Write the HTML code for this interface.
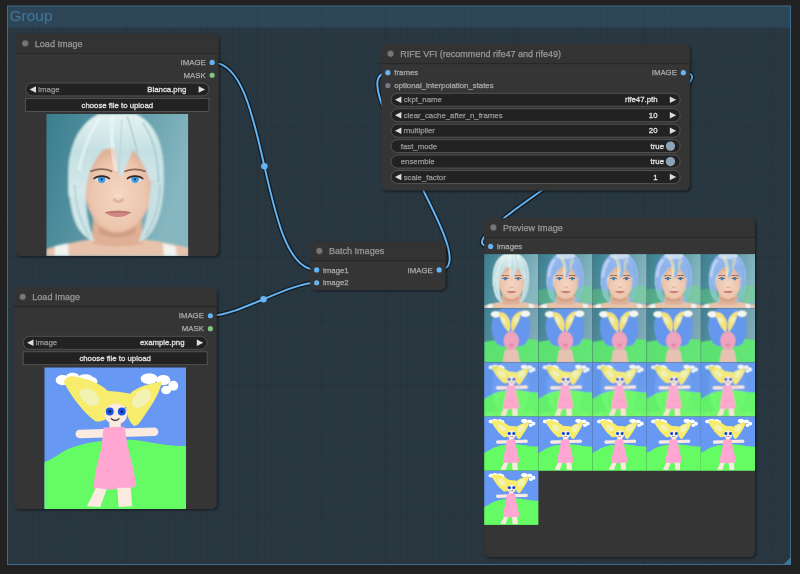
<!DOCTYPE html><html><head><meta charset="utf-8"><style>html,body{margin:0;padding:0;background:#222;overflow:hidden}svg{display:block;will-change:transform}text{font-family:"Liberation Sans", sans-serif}</style></head><body>
<svg width="800" height="574" viewBox="0 0 800 574">
<defs>
<pattern id="gmin" x="0.25" y="0.25" width="6.45" height="6.45" patternUnits="userSpaceOnUse"><rect width="6.45" height="0.9" fill="#000" opacity="0.035"/><rect width="0.9" height="6.45" fill="#000" opacity="0.035"/></pattern>
<pattern id="gmaj" x="62.25" y="62.25" width="64.5" height="64.5" patternUnits="userSpaceOnUse"><rect width="64.5" height="1.2" fill="#000" opacity="0.06"/><rect width="1.2" height="64.5" fill="#000" opacity="0.06"/></pattern>
<filter id="shadow" x="-10%" y="-10%" width="120%" height="120%"><feGaussianBlur stdDeviation="1.2"/></filter>
</defs>

<symbol id="portrait" viewBox="0 0 100 100" preserveAspectRatio="none">
  <defs>
    <linearGradient id="pbg" x1="0" y1="0" x2="1" y2="0.3">
      <stop offset="0" stop-color="#3a7e8f"/>
      <stop offset="0.5" stop-color="#5b97a5"/>
      <stop offset="1" stop-color="#86b7c1"/>
    </linearGradient>
    <linearGradient id="phair" x1="0" y1="0" x2="0" y2="1">
      <stop offset="0" stop-color="#e4f2f1"/>
      <stop offset="0.45" stop-color="#c5e0e3"/>
      <stop offset="1" stop-color="#d5e9ea"/>
    </linearGradient>
    <radialGradient id="pskin" cx="0.5" cy="0.55" r="0.6">
      <stop offset="0" stop-color="#f5d6c2"/>
      <stop offset="0.65" stop-color="#edc6ae"/>
      <stop offset="1" stop-color="#d9a78e"/>
    </radialGradient>
    <filter id="pb1" x="-20%" y="-20%" width="140%" height="140%"><feGaussianBlur stdDeviation="0.9"/></filter>
    <filter id="pb2" x="-20%" y="-20%" width="140%" height="140%"><feGaussianBlur stdDeviation="0.45"/></filter>
  </defs>
  <rect width="100" height="100" fill="url(#pbg)"/>
  <g filter="url(#pb1)">
  <path d="M0,95 C10,92 24,89 34,88 L66,88 C78,89 90,92 100,94 L100,100 L0,100 Z" fill="#e8c3ab"/>
  <path d="M6,93 L15,91 L16,100 L6,100 Z" fill="#f2f2f0"/>
  <path d="M82,91 L91,93 L92,100 L83,100 Z" fill="#f2f2f0"/>
  <path d="M33,72 L67,72 L68,91 C58,94 42,94 32,91 Z" fill="#dfb096"/>
  <path d="M37,84 C45,88 55,88 63,84 L63,80 L37,80 Z" fill="#c99478" opacity="0.6"/>
  <path d="M37,0 L63,0 C72,4 80,14 82,30 C83.5,48 81,66 76,80 C73,86 69,89 65,90 C69,82 72,72 72,60 L28,60 C28,72 30,82 34,90 C29,88 24,84 21,78 C16,66 15,50 15.5,38 C16,22 25,7 37,0 Z" fill="url(#phair)"/>
  <path d="M26.5,42 C26.5,30 36,24 50,24 C64,24 75,30 75,44 C75.5,56 73,65 68,73 C62,80 56,83.5 50,83.5 C44,83.5 38,80 33,73 C28,65 26,54 26.5,42 Z" fill="url(#pskin)"/>
  <ellipse cx="24.5" cy="55" rx="2.6" ry="4.5" fill="#dba88e"/>
  <ellipse cx="75.5" cy="55" rx="2.6" ry="4.5" fill="#dba88e"/>
  <path d="M16,44 C15.5,58 18,72 24,80 C28,85 31,88 34,90 C31,82 29,74 28,64 C27,56 27,50 27,44 Z" fill="#cfe5e7"/>
  <path d="M83,44 C83,58 81,70 77,78 C74,84 69,88 65,90 C68,82 71,74 72,64 C73,56 74,50 74,44 Z" fill="#c7e0e3"/>
  <path d="M15.5,58 C15,40 16,24 22,14 C27,6 32,2 37,0 L63,0 C72,4 80,14 82,30 C82.8,36 82.8,40 82.5,44 L73,47 C70,38 66,31 61,25 C58,32 55,40 52,46 C50,37 49,27 47,18 C40,24 34,32 30.5,41 C29,46 28,52 27.5,58 Z" fill="url(#phair)"/>
  </g>
  <g filter="url(#pb2)" fill="none">
  <path d="M47,1 C45,10 46,22 49,40" stroke="#f3fafa" stroke-width="3" opacity="0.45"/>
  <path d="M57,2 C61,12 63,22 65,32" stroke="#9fc3ca" stroke-width="1.6" opacity="0.45"/>
  <path d="M38,3 C31,12 26,24 23,40" stroke="#f2fafa" stroke-width="2.5" opacity="0.45"/>
  <path d="M68,6 C76,18 79,32 79,48" stroke="#a3c6cc" stroke-width="2" opacity="0.45"/>
  <path d="M20,50 C20,62 23,74 30,86" stroke="#acd0d5" stroke-width="2" opacity="0.5"/>
  <path d="M80,50 C80,62 77,74 70,86" stroke="#a7ccd2" stroke-width="2" opacity="0.5"/>
  <path d="M53,4 C53,15 52,28 51,42" stroke="#b3d3d8" stroke-width="1.4" opacity="0.45"/>
  <path d="M31,40.5 C36,38.5 42,38.5 46.5,40.5" stroke="#8a6654" stroke-width="1.3"/>
  <path d="M55,40.5 C60,38.5 65,38.5 70,40.5" stroke="#8a6654" stroke-width="1.3"/>
  </g>
  <g filter="url(#pb2)">
  <ellipse cx="39" cy="46" rx="5.2" ry="2.3" fill="#e9d8d2"/>
  <ellipse cx="62.5" cy="46" rx="5.2" ry="2.3" fill="#e9d8d2"/>
  <circle cx="39" cy="46" r="2.6" fill="#3a9de8"/>
  <circle cx="62.5" cy="46" r="2.6" fill="#3a9de8"/>
  <circle cx="39" cy="46" r="0.8" fill="#1a3550"/>
  <circle cx="62.5" cy="46" r="0.8" fill="#1a3550"/>
  <path d="M33.3,45.8 C36,43 42,43 44.7,45.8" stroke="#3a2824" stroke-width="1.2" fill="none"/>
  <path d="M56.8,45.8 C59.5,43 65.5,43 68.2,45.8" stroke="#3a2824" stroke-width="1.2" fill="none"/>
  <ellipse cx="50.8" cy="60.5" rx="4" ry="2.2" fill="#c9917a" opacity="0.45"/><ellipse cx="50.8" cy="58.5" rx="2.6" ry="2" fill="#f6dccb" opacity="0.7"/>
  <path d="M41.5,69.5 C46,67.5 55,67.5 59.5,69.5 C55,73.5 46,73.5 41.5,69.5 Z" fill="#d08682"/>
  <path d="M41.5,69.5 C46,68.8 55,68.8 59.5,69.5" stroke="#a8605c" stroke-width="0.6" fill="none"/>
  </g>
</symbol>


<symbol id="drawing" viewBox="0 0 100 100" preserveAspectRatio="none">
  <rect width="100" height="100" fill="#6698f4"/>
  <path d="M0,67 C5,65 9,62 14,59 C20,56 30,53 40,52 C50,50.5 62,50.5 72,52.5 C80,54 90,55.5 100,55.5 L100,100 L0,100 Z" fill="#65fb64"/>
  <g fill="#ffffff">
    <ellipse cx="13" cy="9" rx="5" ry="3.6"/><ellipse cx="20" cy="7.5" rx="5" ry="3.6"/><ellipse cx="29" cy="8.5" rx="6" ry="3.6"/><ellipse cx="34" cy="10" rx="3.5" ry="3"/>
    <ellipse cx="74" cy="8" rx="6" ry="3.8"/><ellipse cx="84" cy="9" rx="5" ry="3.6"/><ellipse cx="91" cy="13" rx="3.5" ry="3.5"/><ellipse cx="86" cy="16" rx="3.5" ry="3"/>
  </g>
  <g fill="#f7ec6c">
    <path d="M14,11 C14,7 18,6 22,6.5 C30,8 38,11 43,15 C47,19 48,24 47,30 C46,36 42,39 36,38 C28,32 20,22 14,11 Z"/>
    <path d="M83,10 C82,16 78,24 72,32 C68,38 66,42 63,41 C59,38 57,30 58,23 C60,16 70,12 83,10 Z"/>
    <path d="M40,16 C46,17 54,17 62,19 L62,28 L40,28 Z"/>
  </g>
  <g fill="#f2f2b2">
    <ellipse cx="32" cy="21" rx="8" ry="5" transform="rotate(38 32 21)"/>
    <ellipse cx="68.5" cy="22" rx="8" ry="5" transform="rotate(-45 68.5 22)"/>
  </g>
  <ellipse cx="50.5" cy="33" rx="8" ry="7.5" fill="#faeadf"/>
  <rect x="46" y="38" width="8" height="5" fill="#faeadf"/>
  <circle cx="46.2" cy="31.2" r="2.8" fill="#1a55e6"/>
  <circle cx="54.7" cy="31.2" r="2.8" fill="#1a55e6"/>
  <circle cx="46.2" cy="31.2" r="0.9" fill="#0a1a40"/>
  <circle cx="54.7" cy="31.2" r="0.9" fill="#0a1a40"/>
  <path d="M47,36 C49,38 51,38 53,36" stroke="#222" stroke-width="0.8" fill="none"/>
  <path d="M25,47 L77.5,45.5" stroke="#faeadf" stroke-width="6" stroke-linecap="round"/>
  <path d="M42,42.5 L56.5,42 C58,48 58,53 59,56 C61,65 64,75 65,84 C58,86 46,87 35,85.5 C35,75 38,66 40,58 C41,52 41,47 42,42.5 Z" fill="#ffa6d2"/>
  <path d="M36.5,85 L44,86 L39.5,98.5 L30,98 Z" fill="#faeadf"/>
  <path d="M51.5,85 L61,85 L62,98 L52.5,98.5 Z" fill="#faeadf"/>
</symbol>


<symbol id="morphA" viewBox="0 0 100 100" preserveAspectRatio="none">
  <defs>
    <mask id="hairmask" maskUnits="userSpaceOnUse" x="0" y="0" width="100" height="100">
      <rect width="100" height="100" fill="#000"/>
      <path d="M36,0 L62,0 C74,3 82,16 82.5,32 C83,48 81,66 76,80 C73,86 69,89 65,90 L34,90 C29,88 24,84 21,78 C16,66 15,50 15.5,36 C16,18 24,4 36,0 Z" fill="#fff"/>
      <path d="M26.5,42 C26.5,30 36,24 50,24 C64,24 75,30 75,44 C75.5,56 73,65 68,73 C62,80 56,83.5 50,83.5 C44,83.5 38,80 33,73 C28,65 26,54 26.5,42 Z" fill="#000"/>
      <path d="M30,70 L70,70 L68,92 L32,92 Z" fill="#000"/>
      <path d="M15.5,44 C16,22 26,3 46,0 L62,0 C76,4 83,20 82.5,44 L71,44 C69,37 66,31 61,25 C58,32 55,40 52,46 C50,37 49,27 47,18 C40,24 33,33 27,44 Z" fill="#fff"/>
      <path d="M16,44 C15.5,58 18,72 24,80 C28,85 31,88 34,90 C31,82 29,74 28,64 C27,56 27,50 27,44 Z" fill="#fff"/>
      <path d="M83,44 C83,58 81,70 77,78 C74,84 69,88 65,90 C68,82 71,74 72,64 C73,56 74,50 74,44 Z" fill="#fff"/>
    </mask>
    <filter id="mb1" x="-20%" y="-20%" width="140%" height="140%"><feGaussianBlur stdDeviation="1.2"/></filter>
  </defs>
  <use href="#portrait" x="0" y="0" width="100" height="100"/>
  <g filter="url(#mb1)">
    <rect width="100" height="100" fill="#5f8ff0" opacity="0.55" mask="url(#hairmask)"/>
    <path d="M38,6 C44,12 47,22 48,36 C50,38 52,36 53,30 C52,20 48,10 44,4 Z" fill="#f2eea0" opacity="0.6"/><path d="M60,8 C58,16 57,24 58,30 C60,28 63,20 66,10 Z" fill="#f2eea0" opacity="0.5"/>
    <ellipse cx="12" cy="78" rx="22" ry="14" fill="#60f060" opacity="0.3"/><ellipse cx="88" cy="74" rx="20" ry="16" fill="#60f060" opacity="0.3"/>
    <path d="M30,10 C24,18 20,30 19,42" stroke="#f0f6f6" stroke-width="4" fill="none" opacity="0.5"/>
    <ellipse cx="50" cy="3" rx="18" ry="6" fill="#eef6f4" opacity="0.55"/>
  </g>
</symbol>
<symbol id="morphB" viewBox="0 0 100 100" preserveAspectRatio="none">
  <defs>
    <filter id="mb2" x="-20%" y="-20%" width="140%" height="140%"><feGaussianBlur stdDeviation="0.9"/></filter>
    <linearGradient id="mbg" x1="0" y1="0" x2="1" y2="0.3">
      <stop offset="0" stop-color="#3f8092"/>
      <stop offset="1" stop-color="#7faab8"/>
    </linearGradient>
  </defs>
  <rect width="100" height="100" fill="url(#mbg)"/>
  <g filter="url(#mb2)">
    <path d="M0,62 C20,58 40,56 60,56 C80,56 90,58 100,58 L100,100 L0,100 Z" fill="#5ef06a" opacity="0.85"/>
    <path d="M34,0 L64,0 C76,3 84,16 84.5,32 C85,46 82,58 76,66 C68,73 32,73 24,66 C17,58 14,46 13.5,32 C14,18 22,4 34,0 Z" fill="#6598ec"/>
    <ellipse cx="21" cy="11" rx="9" ry="6" fill="#f4f6f2"/>
    <ellipse cx="76" cy="10" rx="9" ry="6" fill="#f4f6f2"/>
    <path d="M26,8 C34,5 42,10 47,22 C49,32 48,40 46,44 C38,38 31,26 26,8 Z" fill="#f2e278"/>
    <path d="M68,5 C68,16 62,30 52,44 C49,36 49,26 52,18 C57,10 62,7 68,5 Z" fill="#f2e278"/>
    <ellipse cx="36" cy="22" rx="4" ry="7" fill="#eef0b8" transform="rotate(-30 36 22)"/><ellipse cx="59" cy="21" rx="4" ry="7" fill="#eef0b8" transform="rotate(30 59 21)"/>
    <path d="M38,78 C44,74 56,74 62,78 L66,100 L34,100 Z" fill="#e6c2b2"/>
    <ellipse cx="50" cy="60" rx="14" ry="17" fill="#eea4bd"/>
    <ellipse cx="50" cy="68" rx="5" ry="3" fill="#e58aa8"/>
    </g>
</symbol>

<filter id="cellblur" x="-5%" y="-5%" width="110%" height="110%"><feGaussianBlur stdDeviation="0.6"/></filter><filter id="cellblur2" x="-5%" y="-5%" width="110%" height="110%"><feGaussianBlur stdDeviation="1.2"/></filter>
<rect width="800" height="574" fill="#222"/>
<rect x="7" y="6" width="783.5" height="558.5" fill="#3f789e" fill-opacity="0.25"/>
<rect x="7" y="6" width="783.5" height="21.67" fill="#3f789e" fill-opacity="0.25"/>
<rect width="800" height="574" fill="url(#gmin)"/>
<rect width="800" height="574" fill="url(#gmaj)"/>
<rect x="7.5" y="6" width="783.0" height="558.5" fill="none" stroke="#3f789e" stroke-width="1" stroke-opacity="0.85"/>
<path d="M791.0,564.5 L783.50,564.5 L791.0,557.00 Z" fill="#3f789e"/>
<text x="9.58" y="21.48" font-size="15.48" fill="#3f789e">Group</text>
<path d="M212.15,62.38 C270.23,62.38 258.57,269.88 316.65,269.88" fill="none" stroke="#000" stroke-opacity="0.5" stroke-width="4.52" stroke-linejoin="round"/>
<path d="M212.15,62.38 C270.23,62.38 258.57,269.88 316.65,269.88" fill="none" stroke="#64b5f6" stroke-width="1.94"/>
<circle cx="264.40" cy="166.13" r="3.23" fill="#64b5f6"/>
<path d="M210.35,315.73 C238.17,315.73 288.83,282.78 316.65,282.78" fill="none" stroke="#000" stroke-opacity="0.5" stroke-width="4.52" stroke-linejoin="round"/>
<path d="M210.35,315.73 C238.17,315.73 288.83,282.78 316.65,282.78" fill="none" stroke="#64b5f6" stroke-width="1.94"/>
<circle cx="263.50" cy="299.26" r="3.23" fill="#64b5f6"/>
<path d="M439.15,269.88 C490.09,269.88 336.91,72.68 387.85,72.68" fill="none" stroke="#000" stroke-opacity="0.5" stroke-width="4.52" stroke-linejoin="round"/>
<path d="M439.15,269.88 C490.09,269.88 336.91,72.68 387.85,72.68" fill="none" stroke="#64b5f6" stroke-width="1.94"/>
<circle cx="413.50" cy="171.28" r="3.23" fill="#64b5f6"/>
<path d="M683.35,72.68 C748.21,72.68 425.79,246.38 490.65,246.38" fill="none" stroke="#000" stroke-opacity="0.5" stroke-width="4.52" stroke-linejoin="round"/>
<path d="M683.35,72.68 C748.21,72.68 425.79,246.38 490.65,246.38" fill="none" stroke="#64b5f6" stroke-width="1.94"/>
<circle cx="587.00" cy="159.53" r="3.23" fill="#64b5f6"/>
<rect x="17.30" y="35.30" width="202.60" height="222.00" rx="5.16" fill="#000" opacity="0.45" filter="url(#shadow)"/>
<rect x="16.00" y="34.00" width="202.60" height="222.00" rx="5.16" fill="#353535"/>
<path d="M16.00,53.35 L16.00,39.16 Q16.00,34.00 21.16,34.00 L213.44,34.00 Q218.60,34.00 218.60,39.16 L218.60,53.35 Z" fill="#333"/>
<rect x="16.00" y="52.70" width="202.60" height="1.3" fill="#000" opacity="0.2"/>
<circle cx="25.18" cy="43.47" r="3.4" fill="#777" stroke="#2c2c2c" stroke-width="0.5"/>
<text x="34.85" y="46.60" font-size="9.030000000000001" fill="#999" stroke="#999" stroke-width="0.25" text-anchor="start" font-weight="normal">Load Image</text>
<circle cx="212.15" cy="62.38" r="2.58" fill="#64b5f6"/>
<text x="205.70" y="65.09" font-size="7.8" fill="#aaa" stroke="#aaa" stroke-width="0.25" text-anchor="end" font-weight="normal">IMAGE</text>
<circle cx="212.15" cy="75.28" r="2.58" fill="#81c784"/>
<text x="205.70" y="77.99" font-size="7.8" fill="#aaa" stroke="#aaa" stroke-width="0.25" text-anchor="end" font-weight="normal">MASK</text>
<rect x="25.68" y="83.02" width="183.25" height="12.90" rx="6.45" fill="#222" stroke="#666" stroke-width="0.65"/>
<path d="M36.00,86.25 L29.55,89.47 L36.00,92.70 Z" fill="#ddd"/>
<path d="M198.60,86.25 L205.05,89.47 L198.60,92.70 Z" fill="#ddd"/>
<text x="38.33" y="92.05" font-size="7.8" fill="#999" stroke="#999" stroke-width="0.25" text-anchor="start" font-weight="normal">image</text>
<text x="186.35" y="92.05" font-size="7.8" fill="#ddd" stroke="#ddd" stroke-width="0.35" text-anchor="end" font-weight="normal">Bianca.png</text>
<rect x="25.68" y="98.50" width="183.25" height="12.90" fill="#222" stroke="#666" stroke-width="0.65"/>
<text x="117.30" y="107.53" font-size="7.8" fill="#ddd" stroke="#ddd" stroke-width="0.35" text-anchor="middle" font-weight="normal">choose file to upload</text>
<use href="#portrait" x="46.29" y="113.98" width="142.02" height="142.02"/>
<rect x="14.80" y="288.65" width="203.30" height="221.70" rx="5.16" fill="#000" opacity="0.45" filter="url(#shadow)"/>
<rect x="13.50" y="287.35" width="203.30" height="221.70" rx="5.16" fill="#353535"/>
<path d="M13.50,306.70 L13.50,292.51 Q13.50,287.35 18.66,287.35 L211.64,287.35 Q216.80,287.35 216.80,292.51 L216.80,306.70 Z" fill="#333"/>
<rect x="13.50" y="306.05" width="203.30" height="1.3" fill="#000" opacity="0.2"/>
<circle cx="22.68" cy="296.83" r="3.4" fill="#777" stroke="#2c2c2c" stroke-width="0.5"/>
<text x="32.35" y="299.95" font-size="9.030000000000001" fill="#999" stroke="#999" stroke-width="0.25" text-anchor="start" font-weight="normal">Load Image</text>
<circle cx="210.35" cy="315.73" r="2.58" fill="#64b5f6"/>
<text x="203.90" y="318.44" font-size="7.8" fill="#aaa" stroke="#aaa" stroke-width="0.25" text-anchor="end" font-weight="normal">IMAGE</text>
<circle cx="210.35" cy="328.63" r="2.58" fill="#81c784"/>
<text x="203.90" y="331.34" font-size="7.8" fill="#aaa" stroke="#aaa" stroke-width="0.25" text-anchor="end" font-weight="normal">MASK</text>
<rect x="23.18" y="336.37" width="183.95" height="12.90" rx="6.45" fill="#222" stroke="#666" stroke-width="0.65"/>
<path d="M33.50,339.60 L27.05,342.82 L33.50,346.05 Z" fill="#ddd"/>
<path d="M196.81,339.60 L203.25,342.82 L196.81,346.05 Z" fill="#ddd"/>
<text x="35.83" y="345.40" font-size="7.8" fill="#999" stroke="#999" stroke-width="0.25" text-anchor="start" font-weight="normal">image</text>
<text x="184.55" y="345.40" font-size="7.8" fill="#ddd" stroke="#ddd" stroke-width="0.35" text-anchor="end" font-weight="normal">example.png</text>
<rect x="23.18" y="351.85" width="183.95" height="12.90" fill="#222" stroke="#666" stroke-width="0.65"/>
<text x="115.15" y="360.88" font-size="7.8" fill="#ddd" stroke="#ddd" stroke-width="0.35" text-anchor="middle" font-weight="normal">choose file to upload</text>
<use href="#drawing" x="44.29" y="367.33" width="141.72" height="141.72"/>
<rect x="311.50" y="242.80" width="135.40" height="48.40" rx="5.16" fill="#000" opacity="0.45" filter="url(#shadow)"/>
<rect x="310.20" y="241.50" width="135.40" height="48.40" rx="5.16" fill="#353535"/>
<path d="M310.20,260.85 L310.20,246.66 Q310.20,241.50 315.36,241.50 L440.44,241.50 Q445.60,241.50 445.60,246.66 L445.60,260.85 Z" fill="#333"/>
<rect x="310.20" y="260.20" width="135.40" height="1.3" fill="#000" opacity="0.2"/>
<circle cx="319.38" cy="250.98" r="3.4" fill="#777" stroke="#2c2c2c" stroke-width="0.5"/>
<text x="329.05" y="254.10" font-size="9.030000000000001" fill="#999" stroke="#999" stroke-width="0.25" text-anchor="start" font-weight="normal">Batch Images</text>
<circle cx="316.65" cy="269.88" r="2.58" fill="#64b5f6"/>
<text x="323.10" y="272.59" font-size="7.8" fill="#aaa" stroke="#aaa" stroke-width="0.25" text-anchor="start" font-weight="normal">image1</text>
<circle cx="316.65" cy="282.78" r="2.58" fill="#64b5f6"/>
<text x="323.10" y="285.49" font-size="7.8" fill="#aaa" stroke="#aaa" stroke-width="0.25" text-anchor="start" font-weight="normal">image2</text>
<circle cx="439.15" cy="269.88" r="2.58" fill="#64b5f6"/>
<text x="432.70" y="272.59" font-size="7.8" fill="#aaa" stroke="#aaa" stroke-width="0.25" text-anchor="end" font-weight="normal">IMAGE</text>
<rect x="382.70" y="45.60" width="308.40" height="146.10" rx="5.16" fill="#000" opacity="0.45" filter="url(#shadow)"/>
<rect x="381.40" y="44.30" width="308.40" height="146.10" rx="5.16" fill="#353535"/>
<path d="M381.40,63.65 L381.40,49.46 Q381.40,44.30 386.56,44.30 L684.64,44.30 Q689.80,44.30 689.80,49.46 L689.80,63.65 Z" fill="#333"/>
<rect x="381.40" y="63.00" width="308.40" height="1.3" fill="#000" opacity="0.2"/>
<circle cx="390.57" cy="53.77" r="3.4" fill="#777" stroke="#2c2c2c" stroke-width="0.5"/>
<text x="400.25" y="56.90" font-size="9.030000000000001" fill="#999" stroke="#999" stroke-width="0.25" text-anchor="start" font-weight="normal">RIFE VFI (recommend rife47 and rife49)</text>
<circle cx="387.85" cy="72.68" r="2.58" fill="#64b5f6"/>
<text x="394.30" y="75.39" font-size="7.8" fill="#aaa" stroke="#aaa" stroke-width="0.25" text-anchor="start" font-weight="normal">frames</text>
<circle cx="387.85" cy="85.58" r="2.58" fill="#778"/>
<text x="394.30" y="88.29" font-size="7.8" fill="#aaa" stroke="#aaa" stroke-width="0.25" text-anchor="start" font-weight="normal">optional_interpolation_states</text>
<circle cx="683.35" cy="72.68" r="2.58" fill="#64b5f6"/>
<text x="676.90" y="75.39" font-size="7.8" fill="#aaa" stroke="#aaa" stroke-width="0.25" text-anchor="end" font-weight="normal">IMAGE</text>
<rect x="391.07" y="93.32" width="289.05" height="12.90" rx="6.45" fill="#222" stroke="#666" stroke-width="0.65"/>
<path d="M401.39,96.54 L394.94,99.77 L401.39,103.00 Z" fill="#ddd"/>
<path d="M669.80,96.54 L676.25,99.77 L669.80,103.00 Z" fill="#ddd"/>
<text x="403.72" y="102.35" font-size="7.8" fill="#999" stroke="#999" stroke-width="0.25" text-anchor="start" font-weight="normal">ckpt_name</text>
<text x="657.55" y="102.35" font-size="7.8" fill="#ddd" stroke="#ddd" stroke-width="0.35" text-anchor="end" font-weight="normal">rife47.pth</text>
<rect x="391.07" y="108.77" width="289.05" height="12.90" rx="6.45" fill="#222" stroke="#666" stroke-width="0.65"/>
<path d="M401.39,111.99 L394.94,115.22 L401.39,118.45 Z" fill="#ddd"/>
<path d="M669.80,111.99 L676.25,115.22 L669.80,118.45 Z" fill="#ddd"/>
<text x="403.72" y="117.80" font-size="7.8" fill="#999" stroke="#999" stroke-width="0.25" text-anchor="start" font-weight="normal">clear_cache_after_n_frames</text>
<text x="657.55" y="117.80" font-size="7.8" fill="#ddd" stroke="#ddd" stroke-width="0.35" text-anchor="end" font-weight="normal">10</text>
<rect x="391.07" y="124.22" width="289.05" height="12.90" rx="6.45" fill="#222" stroke="#666" stroke-width="0.65"/>
<path d="M401.39,127.44 L394.94,130.67 L401.39,133.90 Z" fill="#ddd"/>
<path d="M669.80,127.44 L676.25,130.67 L669.80,133.90 Z" fill="#ddd"/>
<text x="403.72" y="133.25" font-size="7.8" fill="#999" stroke="#999" stroke-width="0.25" text-anchor="start" font-weight="normal">multiplier</text>
<text x="657.55" y="133.25" font-size="7.8" fill="#ddd" stroke="#ddd" stroke-width="0.35" text-anchor="end" font-weight="normal">20</text>
<rect x="391.07" y="139.67" width="289.05" height="12.90" rx="6.45" fill="#222" stroke="#666" stroke-width="0.65"/>
<text x="400.75" y="148.70" font-size="7.8" fill="#999" stroke="#999" stroke-width="0.25" text-anchor="start" font-weight="normal">fast_mode</text>
<text x="664.00" y="148.70" font-size="7.8" fill="#ddd" stroke="#ddd" stroke-width="0.35" text-anchor="end" font-weight="normal">true</text>
<circle cx="670.45" cy="146.12" r="4.64" fill="#8ca2b8"/>
<rect x="391.07" y="155.12" width="289.05" height="12.90" rx="6.45" fill="#222" stroke="#666" stroke-width="0.65"/>
<text x="400.75" y="164.15" font-size="7.8" fill="#999" stroke="#999" stroke-width="0.25" text-anchor="start" font-weight="normal">ensemble</text>
<text x="664.00" y="164.15" font-size="7.8" fill="#ddd" stroke="#ddd" stroke-width="0.35" text-anchor="end" font-weight="normal">true</text>
<circle cx="670.45" cy="161.57" r="4.64" fill="#8ca2b8"/>
<rect x="391.07" y="170.57" width="289.05" height="12.90" rx="6.45" fill="#222" stroke="#666" stroke-width="0.65"/>
<path d="M401.39,173.79 L394.94,177.02 L401.39,180.25 Z" fill="#ddd"/>
<path d="M669.80,173.79 L676.25,177.02 L669.80,180.25 Z" fill="#ddd"/>
<text x="403.72" y="179.60" font-size="7.8" fill="#999" stroke="#999" stroke-width="0.25" text-anchor="start" font-weight="normal">scale_factor</text>
<text x="657.55" y="179.60" font-size="7.8" fill="#ddd" stroke="#ddd" stroke-width="0.35" text-anchor="end" font-weight="normal">1</text>
<rect x="485.50" y="219.30" width="270.80" height="339.00" rx="5.16" fill="#000" opacity="0.45" filter="url(#shadow)"/>
<rect x="484.20" y="218.00" width="270.80" height="339.00" rx="5.16" fill="#353535"/>
<path d="M484.20,237.35 L484.20,223.16 Q484.20,218.00 489.36,218.00 L749.84,218.00 Q755.00,218.00 755.00,223.16 L755.00,237.35 Z" fill="#333"/>
<rect x="484.20" y="236.70" width="270.80" height="1.3" fill="#000" opacity="0.2"/>
<circle cx="493.38" cy="227.48" r="3.4" fill="#777" stroke="#2c2c2c" stroke-width="0.5"/>
<text x="503.05" y="230.60" font-size="9.030000000000001" fill="#999" stroke="#999" stroke-width="0.25" text-anchor="start" font-weight="normal">Preview Image</text>
<circle cx="490.65" cy="246.38" r="2.58" fill="#64b5f6"/>
<text x="497.10" y="249.09" font-size="7.8" fill="#aaa" stroke="#aaa" stroke-width="0.25" text-anchor="start" font-weight="normal">images</text>
<svg x="484.20" y="254.12" width="54.16" height="54.16" viewBox="0 0 100 100" preserveAspectRatio="none">
<use href="#portrait" width="100" height="100"/>
</svg>
<svg x="538.36" y="254.12" width="54.16" height="54.16" viewBox="0 0 100 100" preserveAspectRatio="none">
<use href="#morphA" width="100" height="100"/>
</svg>
<svg x="592.52" y="254.12" width="54.16" height="54.16" viewBox="0 0 100 100" preserveAspectRatio="none">
<use href="#morphA" width="100" height="100"/>
</svg>
<svg x="646.68" y="254.12" width="54.16" height="54.16" viewBox="0 0 100 100" preserveAspectRatio="none">
<use href="#morphA" width="100" height="100"/>
</svg>
<svg x="700.84" y="254.12" width="54.16" height="54.16" viewBox="0 0 100 100" preserveAspectRatio="none">
<use href="#morphA" width="100" height="100"/>
</svg>
<svg x="484.20" y="308.28" width="54.16" height="54.16" viewBox="0 0 100 100" preserveAspectRatio="none">
<use href="#morphB" width="100" height="100"/>
</svg>
<svg x="538.36" y="308.28" width="54.16" height="54.16" viewBox="0 0 100 100" preserveAspectRatio="none">
<use href="#morphB" width="100" height="100"/>
</svg>
<svg x="592.52" y="308.28" width="54.16" height="54.16" viewBox="0 0 100 100" preserveAspectRatio="none">
<use href="#morphB" width="100" height="100"/>
</svg>
<svg x="646.68" y="308.28" width="54.16" height="54.16" viewBox="0 0 100 100" preserveAspectRatio="none">
<use href="#morphB" width="100" height="100"/>
</svg>
<svg x="700.84" y="308.28" width="54.16" height="54.16" viewBox="0 0 100 100" preserveAspectRatio="none">
<use href="#morphB" width="100" height="100"/>
</svg>
<svg x="484.20" y="362.44" width="54.16" height="54.16" viewBox="0 0 100 100" preserveAspectRatio="none">
<use href="#drawing" width="100" height="100"/><g filter="url(#cellblur2)"><use href="#drawing" width="100" height="100"/><use href="#portrait" width="100" height="100" opacity="0.1"/></g>
</svg>
<svg x="538.36" y="362.44" width="54.16" height="54.16" viewBox="0 0 100 100" preserveAspectRatio="none">
<use href="#drawing" width="100" height="100"/><g filter="url(#cellblur2)"><use href="#drawing" width="100" height="100"/><use href="#portrait" width="100" height="100" opacity="0.1"/></g>
</svg>
<svg x="592.52" y="362.44" width="54.16" height="54.16" viewBox="0 0 100 100" preserveAspectRatio="none">
<use href="#drawing" width="100" height="100"/><g filter="url(#cellblur2)"><use href="#drawing" width="100" height="100"/><use href="#portrait" width="100" height="100" opacity="0.1"/></g>
</svg>
<svg x="646.68" y="362.44" width="54.16" height="54.16" viewBox="0 0 100 100" preserveAspectRatio="none">
<use href="#drawing" width="100" height="100"/><g filter="url(#cellblur2)"><use href="#drawing" width="100" height="100"/><use href="#portrait" width="100" height="100" opacity="0.1"/></g>
</svg>
<svg x="700.84" y="362.44" width="54.16" height="54.16" viewBox="0 0 100 100" preserveAspectRatio="none">
<use href="#drawing" width="100" height="100"/><g filter="url(#cellblur2)"><use href="#drawing" width="100" height="100"/><use href="#portrait" width="100" height="100" opacity="0.1"/></g>
</svg>
<svg x="484.20" y="416.60" width="54.16" height="54.16" viewBox="0 0 100 100" preserveAspectRatio="none">
<use href="#drawing" width="100" height="100"/><g filter="url(#cellblur)"><use href="#drawing" width="100" height="100"/></g>
</svg>
<svg x="538.36" y="416.60" width="54.16" height="54.16" viewBox="0 0 100 100" preserveAspectRatio="none">
<use href="#drawing" width="100" height="100"/><g filter="url(#cellblur)"><use href="#drawing" width="100" height="100"/></g>
</svg>
<svg x="592.52" y="416.60" width="54.16" height="54.16" viewBox="0 0 100 100" preserveAspectRatio="none">
<use href="#drawing" width="100" height="100"/><g filter="url(#cellblur)"><use href="#drawing" width="100" height="100"/></g>
</svg>
<svg x="646.68" y="416.60" width="54.16" height="54.16" viewBox="0 0 100 100" preserveAspectRatio="none">
<use href="#drawing" width="100" height="100"/><g filter="url(#cellblur)"><use href="#drawing" width="100" height="100"/></g>
</svg>
<svg x="700.84" y="416.60" width="54.16" height="54.16" viewBox="0 0 100 100" preserveAspectRatio="none">
<use href="#drawing" width="100" height="100"/><g filter="url(#cellblur)"><use href="#drawing" width="100" height="100"/></g>
</svg>
<svg x="484.20" y="470.76" width="54.16" height="54.16" viewBox="0 0 100 100" preserveAspectRatio="none">
<use href="#drawing" width="100" height="100"/>
</svg>
</svg></body></html>
